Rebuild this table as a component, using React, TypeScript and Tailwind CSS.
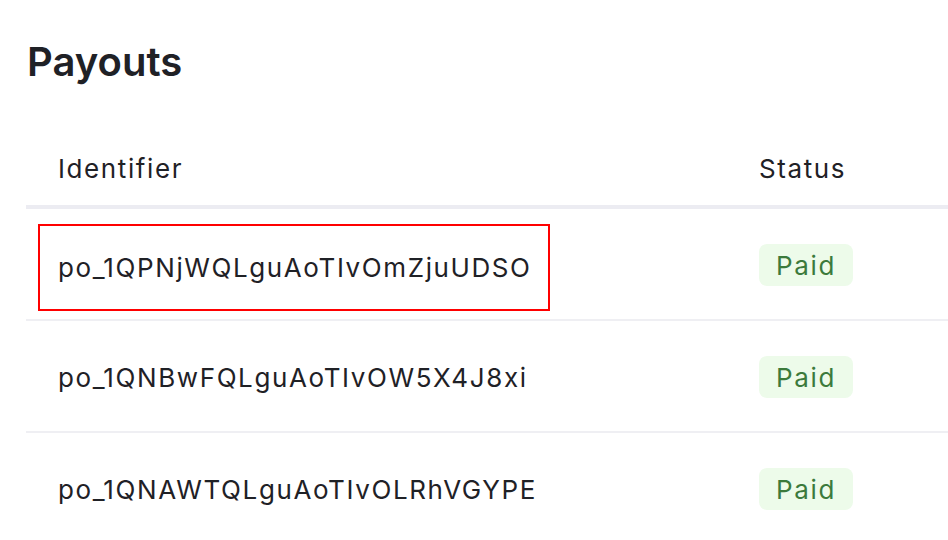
export default function App() {
  const payouts = [
    { id: "po_1QPNjWQLguAoTIvOmZjuUDSO", status: "Paid", highlighted: true },
    { id: "po_1QNBwFQLguAoTIvOW5X4J8xi", status: "Paid" },
    { id: "po_1QNAWTQLguAoTIvOLRhVGYPE", status: "Paid" },
  ];

  return (
    <div className="w-[948px] h-[540px] overflow-hidden bg-white font-['Inter',sans-serif] text-[#1f2126]">
      <h1 className="pl-[27px] pt-[38px] text-[40px] leading-[48px] font-semibold">Payouts</h1>
      <div className="ml-[26px] w-[1000px] mt-[54px] text-[26px] tracking-[1.6px]">
        <div className="flex items-center h-[69px] pb-[8px] border-b-4 border-[#ececf2]">
          <div className="w-[733px] shrink-0 pl-[32px]">Identifier</div>
          <div>Status</div>
        </div>
        {payouts.map((p) => (
          <div key={p.id} className="flex items-center h-[112px] pt-[2px] border-b-2 border-[#efeff3]">
            <div className="w-[733px] shrink-0 pl-[12px]">
              <div
                className={
                  p.highlighted
                    ? "w-[512px] h-[87px] mt-[5px] flex items-center pl-[18px] border-2 border-[#ff0000]"
                    : "w-[512px] h-[87px] flex items-center pl-[20px]"
                }
              >
                {p.id}
              </div>
            </div>
            <div>
              <span className="inline-flex items-center justify-center w-[94px] h-[42px] rounded-[8px] bg-[#edfbea] text-[#3c7a3c]">
                {p.status}
              </span>
            </div>
          </div>
        ))}
      </div>
    </div>
  );
}
